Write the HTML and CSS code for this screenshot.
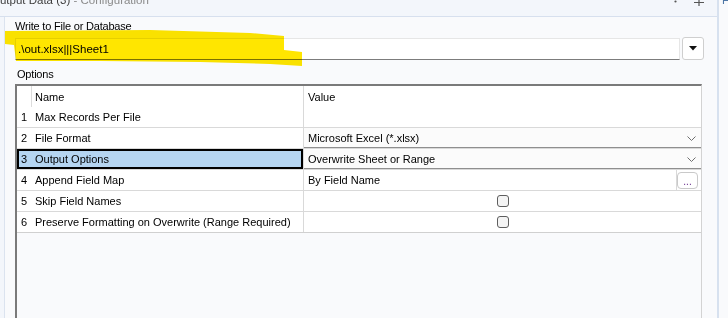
FILE: index.html
```html
<!DOCTYPE html>
<html lang="en">
<head>
  <meta charset="UTF-8">
  <title>Output Data (3) - Configuration</title>
  <link rel="stylesheet" href="styles.css">
</head>
<body>

<div class="window">
  <div class="main">
    <div class="titlebar">
      <div class="title"><span class="title-tool">Output Data (3)</span> <span class="title-sub">- Configuration</span></div>
      <div class="title-icons">
        <svg width="3" height="4" viewBox="0 0 3 4"><circle cx="1.5" cy="1.5" r="1.1" fill="#555"/></svg>
        <svg width="12" height="7" viewBox="0 0 12 7"><path d="M6 0V6M1 2.5H11" stroke="#555" stroke-width="1.2" fill="none"/></svg>
      </div>
    </div>

    <div class="body">
      <div class="rail"></div>
      <div class="content">
        <div class="label">Write to File or Database</div>
        <div class="file-row">
          <div class="file-input">.\out.xlsx|||Sheet1</div>
          <button class="drop-btn">
            <svg width="8" height="5" viewBox="0 0 8 5"><path d="M0 0H8L4 4.5Z" fill="#111"/></svg>
          </button>
        </div>

        <div class="label options-label">Options</div>
        <div class="grid">
          <div class="row head">
            <div class="key"><div class="num"></div><div class="name">Name</div></div>
            <div class="val">Value</div>
          </div>
          <div class="row first">
            <div class="key"><div class="num">1</div><div class="name">Max Records Per File</div></div>
            <div class="val"></div>
          </div>
          <div class="row">
            <div class="key"><div class="num">2</div><div class="name">File Format</div></div>
            <div class="val combo">
              <span>Microsoft Excel (*.xlsx)</span>
              <svg width="9" height="5" viewBox="0 0 9 5"><path d="M0.5 0.5L4.5 4.5L8.5 0.5" stroke="#6f6f6f" fill="none"/></svg>
            </div>
          </div>
          <div class="row selected">
            <div class="key"><div class="num">3</div><div class="name">Output Options</div></div>
            <div class="val combo">
              <span>Overwrite Sheet or Range</span>
              <svg width="9" height="5" viewBox="0 0 9 5"><path d="M0.5 0.5L4.5 4.5L8.5 0.5" stroke="#6f6f6f" fill="none"/></svg>
            </div>
          </div>
          <div class="row">
            <div class="key"><div class="num">4</div><div class="name">Append Field Map</div></div>
            <div class="val picker">
              <span class="picker-text">By Field Name</span>
              <div class="picker-cell"><button class="dots-btn">...</button></div>
            </div>
          </div>
          <div class="row">
            <div class="key"><div class="num">5</div><div class="name">Skip Field Names</div></div>
            <div class="val check"><div class="check-box"></div></div>
          </div>
          <div class="row last">
            <div class="key"><div class="num">6</div><div class="name">Preserve Formatting on Overwrite (Range Required)</div></div>
            <div class="val check"><div class="check-box"></div></div>
          </div>
        </div>
      </div>
    </div>
  </div>
  <div class="side-divider"></div>
  <div class="side"><span class="side-text">Fi</span></div>
</div>

<!-- highlighter stroke drawn over the screenshot -->
<svg class="marker" width="728" height="318" viewBox="0 0 728 318">
  <path d="M5 31 L150 30 L250 33 L284 36 L284 50 L302 52 L302 66 L270 64 L200 62 L100 61 L16 61 L14 45 L5 44 Z" fill="#ffe600"/>
</svg>

</body>
</html>
```

FILE: styles.css
```css
body {
  margin: 0;
  width: 728px;
  height: 318px;
  overflow: hidden;
  position: relative;
  font-family: "Liberation Sans", Arial, sans-serif;
  font-size: 11px;
  color: #000;
  background-color: #f9fafc;
}

.window {
  display: flex;
  height: 318px;
}

.main {
  width: 717px;
  display: flex;
  flex-direction: column;
}

/* Title bar */
.titlebar {
  height: 16px;
  border-bottom: 1px solid #d7e0ee;
  background-color: #f3f6fb;
  display: flex;
  justify-content: space-between;
  overflow: hidden;
}

.title {
  margin-top: -7px;
  margin-left: -9px;
  font-size: 11.5px;
  line-height: 14px;
  white-space: nowrap;
}

.title-tool {
  color: #3c3c3c;
}

.title-sub {
  color: #8a8a8a;
}

.title-icons {
  display: flex;
  align-items: flex-start;
  gap: 16px;
  padding-right: 12px;
}

/* Body */
.body {
  flex: 1;
  display: flex;
  min-height: 0;
}

.rail {
  width: 4px;
  border-right: 1px solid #dbe3ef;
  background-color: #f3f6fb;
}

.content {
  flex: 1;
  min-width: 0;
  padding: 2px 15px 0 10px;
  display: flex;
  flex-direction: column;
}

.label {
  line-height: 14px;
  letter-spacing: -0.2px;
}

.options-label {
  margin-top: 7px;
  padding-left: 2px;
}

.file-row {
  display: flex;
  align-items: flex-start;
  gap: 2px;
  height: 23px;
  margin-top: 4px;
  margin-right: -2px;
}

.file-input {
  flex: 1;
  height: 22px;
  margin-top: 1px;
  box-sizing: border-box;
  background-color: #fff;
  border: 1px solid #e6e6e6;
  border-bottom-color: #7c7c7c;
  padding: 0 2px;
  line-height: 20px;
  font-size: 11.5px;
}

.drop-btn {
  width: 22px;
  height: 23px;
  padding: 0;
  border: 1px solid #cfcfcf;
  border-radius: 3px;
  background-color: #fff;
  display: flex;
  align-items: center;
  justify-content: center;
}

/* Property grid */
.grid {
  flex: 1;
  margin-top: 3px;
  border-top: 2px solid #7a7a7a;
  border-left: 2px solid #7a7a7a;
  border-right: 1px solid #d3d3d3;
  background-color: #f9fafc;
}

.row {
  display: flex;
  height: 20px;
  border-top: 1px solid #d9d9d9;
  background-color: #fff;
}

.row.head {
  height: 21px;
  border-top: 0;
}

.row.first {
  border-top: 0;
}

.row.last {
  border-bottom: 1px solid #d0d0d0;
}

.key {
  width: 286px;
  flex-shrink: 0;
  display: flex;
  align-items: center;
  align-self: stretch;
}

.num {
  width: 15px;
  align-self: stretch;
  box-sizing: border-box;
  padding-left: 4px;
  display: flex;
  align-items: center;
  border-right: 1px solid transparent;
}

.head .num {
  border-right-color: #dcdcdc;
}

.name {
  padding-left: 3px;
  white-space: nowrap;
}

.row.selected .key {
  background-color: #b5d5f1;
  box-shadow: inset 0 0 0 2px #000;
}

.val {
  flex: 1;
  min-width: 0;
  border-left: 1px solid #d9d9d9;
  display: flex;
  align-items: center;
  padding: 0 4px;
}

.val.combo {
  justify-content: space-between;
  padding-right: 5px;
  background-color: #fbfbfb;
  box-shadow: inset 0 -1px 0 #8f8f8f;
}

.val.picker {
  padding-right: 0;
}

.picker-text {
  flex: 1;
}

.picker-cell {
  align-self: stretch;
  width: 25px;
  box-sizing: border-box;
  border-left: 1px solid #d9d9d9;
  display: flex;
  align-items: center;
}

.dots-btn {
  width: 21px;
  height: 17px;
  box-sizing: border-box;
  padding: 3px 0 0;
  border: 1px solid #c9c9c9;
  border-radius: 4px;
  background-color: #fff;
  color: #6b2f8f;
  font-family: "Liberation Sans", Arial, sans-serif;
  font-size: 10px;
  line-height: 10px;
}

.val.check {
  justify-content: center;
  padding: 0;
}

.check-box {
  width: 12px;
  height: 12px;
  box-sizing: border-box;
  border: 1px solid #5e5e5e;
  border-radius: 3px;
  background-color: #f4f4f4;
}

/* Right-hand panel edge */
.side-divider {
  width: 2px;
  background-color: #d7e1ef;
}

.side {
  flex: 1;
  overflow: hidden;
  background-color: #f9fafc;
}

.side-text {
  display: block;
  margin-top: -7px;
  padding-left: 3px;
  color: #4f77a6;
  font-size: 11.5px;
  line-height: 14px;
}

/* Yellow highlighter */
.marker {
  position: absolute;
  top: 0;
  left: 0;
  pointer-events: none;
  mix-blend-mode: multiply;
}
```
